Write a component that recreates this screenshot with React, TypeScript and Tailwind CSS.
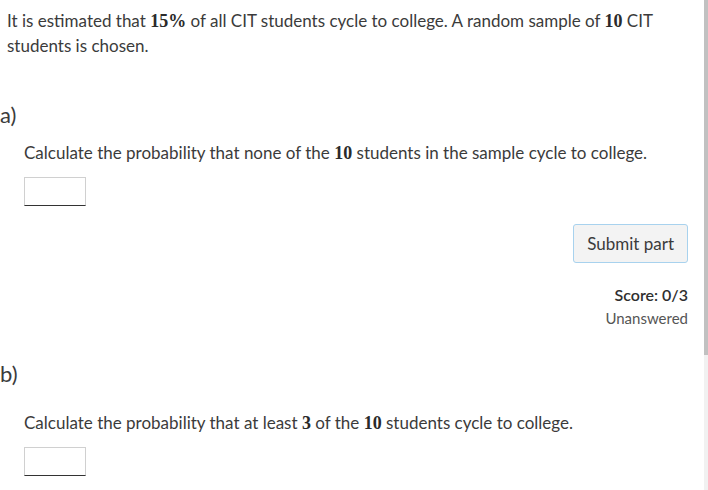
import React from "react";

const M = ({ children }: { children: React.ReactNode }) => (
  <span className="font-['Liberation_Serif',serif] text-[18px] leading-none font-semibold text-[#2a2a2a]">{children}</span>
);

const Input = () => (
  <div className="w-[62px] h-[29px] border border-[#d0d0d0] border-b-[#333] bg-white" />
);

export default function App() {
  return (
    <div className="w-[708px] h-[490px] overflow-hidden bg-white flex font-['Lato',sans-serif] text-[#3b3b3b]">
      <div className="flex-1 flex flex-col">
        <p className="pl-[7px] pr-[40px] pt-[8px] text-[17px] leading-[25px]">
          It is estimated that <M>15%</M> of all CIT students cycle to college. A random sample of <M>10</M> CIT students is chosen.
        </p>
        <div className="mt-[44px] text-[22px] leading-[26px]">a)</div>
        <div className="pl-[24px] mt-[13px] text-[17px] leading-[24px]">
          Calculate the probability that none of the <M>10</M> students in the sample cycle to college.
        </div>
        <div className="pl-[24px] mt-[12px]">
          <Input />
        </div>
        <div className="flex justify-end pr-[16px] mt-[18px]">
          <button className="h-[39px] px-[13px] bg-[#f3f3f3] border border-[#a8d2ee] rounded-[3px] text-[17px] text-[#3b3b3b]">
            Submit part
          </button>
        </div>
        <div className="flex flex-col items-end pr-[16px] mt-[20px]">
          <div className="text-[16px] leading-[24px] font-semibold text-[#2f2f2f]">Score: 0/3</div>
          <div className="text-[15px] leading-[22px] text-[#555]">Unanswered</div>
        </div>
        <div className="mt-[32px] text-[22px] leading-[26px]">b)</div>
        <div className="pl-[24px] mt-[24px] text-[17px] leading-[24px]">
          Calculate the probability that at least <M>3</M> of the <M>10</M> students cycle to college.
        </div>
        <div className="pl-[24px] mt-[12px]">
          <Input />
        </div>
      </div>
      <div className="w-[4px] flex flex-col bg-[#f1f1f1]">
        <div className="h-[355px] bg-[#c1c1c1]" />
      </div>
    </div>
  );
}
